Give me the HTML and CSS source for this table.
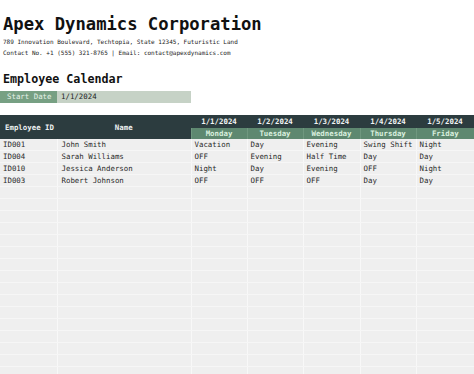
FILE: index.html
```html
<!DOCTYPE html>
<html>
<head>
<meta charset="utf-8">
<link rel="stylesheet" href="styles.css">
</head>
<body>
<div class="head">
  <h1 class="title">Apex Dynamics Corporation</h1>
  <div class="info">789 Innovation Boulevard, Techtopia, State 12345, Futuristic Land</div>
  <div class="info">Contact No. +1 (555) 321-8765 | Email: contact@apexdynamics.com</div>
  <h2 class="subtitle">Employee Calendar</h2>
</div>
<div class="start">
  <div class="start-label">Start Date</div>
  <div class="start-value">1/1/2024</div>
</div>
<table class="cal">
  <colgroup>
    <col class="c-id"><col class="c-name"><col class="c-d"><col class="c-d"><col class="c-d2"><col class="c-d"><col class="c-d3">
  </colgroup>
  <thead>
    <tr class="r-date">
      <th rowspan="2" class="th-id">Employee ID</th>
      <th rowspan="2" class="th-name">Name</th>
      <th>1/1/2024</th><th>1/2/2024</th><th>1/3/2024</th><th>1/4/2024</th><th>1/5/2024</th>
    </tr>
    <tr class="r-day">
      <th>Monday</th><th>Tuesday</th><th>Wednesday</th><th>Thursday</th><th>Friday</th>
    </tr>
  </thead>
  <tbody>
    <tr><td>ID001</td><td>John Smith</td><td>Vacation</td><td>Day</td><td>Evening</td><td>Swing Shift</td><td>Night</td></tr>
    <tr><td>ID004</td><td>Sarah Williams</td><td>OFF</td><td>Evening</td><td>Half Time</td><td>Day</td><td>Day</td></tr>
    <tr><td>ID010</td><td>Jessica Anderson</td><td>Night</td><td>Day</td><td>Evening</td><td>OFF</td><td>Night</td></tr>
    <tr><td>ID003</td><td>Robert Johnson</td><td>OFF</td><td>OFF</td><td>OFF</td><td>Day</td><td>Day</td></tr>
    <tr><td></td><td></td><td></td><td></td><td></td><td></td><td></td></tr>
    <tr><td></td><td></td><td></td><td></td><td></td><td></td><td></td></tr>
    <tr><td></td><td></td><td></td><td></td><td></td><td></td><td></td></tr>
    <tr><td></td><td></td><td></td><td></td><td></td><td></td><td></td></tr>
    <tr><td></td><td></td><td></td><td></td><td></td><td></td><td></td></tr>
    <tr><td></td><td></td><td></td><td></td><td></td><td></td><td></td></tr>
    <tr><td></td><td></td><td></td><td></td><td></td><td></td><td></td></tr>
    <tr><td></td><td></td><td></td><td></td><td></td><td></td><td></td></tr>
    <tr><td></td><td></td><td></td><td></td><td></td><td></td><td></td></tr>
    <tr><td></td><td></td><td></td><td></td><td></td><td></td><td></td></tr>
    <tr><td></td><td></td><td></td><td></td><td></td><td></td><td></td></tr>
    <tr><td></td><td></td><td></td><td></td><td></td><td></td><td></td></tr>
    <tr><td></td><td></td><td></td><td></td><td></td><td></td><td></td></tr>
    <tr><td></td><td></td><td></td><td></td><td></td><td></td><td></td></tr>
    <tr><td></td><td></td><td></td><td></td><td></td><td></td><td></td></tr>
    <tr><td></td><td></td><td></td><td></td><td></td><td></td><td></td></tr>
  </tbody>
</table>
</body>
</html>
```

FILE: styles.css
```css
html, body {
  margin: 0;
  padding: 0;
  background: #ffffff;
  overflow: hidden;
}
body {
  font-family: "DejaVu Sans Mono", "Liberation Mono", monospace;
  color: #111;
  width: 474px;
  height: 374px;
}
.head {
  padding: 13px 3px 0 3px;
}
.title {
  margin: 0;
  font-size: 17.2px;
  line-height: 22px;
  font-weight: bold;
  color: #111;
}
.info {
  font-size: 6px;
  line-height: 11px;
  color: #222;
}
.info:first-of-type {
  margin-top: 1px;
}
.subtitle {
  margin: 14px 0 0 0;
  font-size: 11.7px;
  line-height: 15px;
  font-weight: bold;
  color: #111;
}
.start {
  display: flex;
  margin-top: 4px;
  height: 12px;
  font-size: 7.4px;
  line-height: 12px;
}
.start-label {
  width: 57px;
  background: #77a083;
  color: #e6f2e8;
  padding-left: 7px;
  box-sizing: border-box;
}
.start-value {
  width: 134px;
  background: #c6d2c6;
  color: #222;
  padding-left: 4px;
  box-sizing: border-box;
}
.cal {
  margin-top: 12px;
  border-collapse: collapse;
  table-layout: fixed;
  width: 474px;
  font-size: 7.4px;
}
.c-id { width: 57px; }
.c-name { width: 134px; }
.c-d { width: 56px; }
.c-d2 { width: 57px; }
.c-d3 { width: 58px; }
.cal th {
  padding: 0;
  font-weight: bold;
  white-space: nowrap;
  overflow: hidden;
}
.r-date th {
  background: #2c3c3f;
  color: #f2f4f4;
  height: 13px;
  text-align: center;
}
.r-day th {
  background: #5e8870;
  color: #d9efdf;
  height: 11px;
  text-align: center;
  border-left: 1px solid #6f977f;
}
.cal .th-id {
  text-align: left;
  padding-left: 5px;
  color: #eef2f2;
}
.cal .th-name {
  text-align: center;
  color: #eef2f2;
}
.cal td {
  background: #efefef;
  height: 11px;
  padding: 0 0 0 3px;
  line-height: 11px;
  border-right: 1px solid #f8f8f8;
  border-bottom: 1px solid #f6f6f6;
  color: #2a2a2a;
  white-space: nowrap;
  overflow: hidden;
}
.cal td:nth-child(2) {
  padding-left: 4px;
}
```
